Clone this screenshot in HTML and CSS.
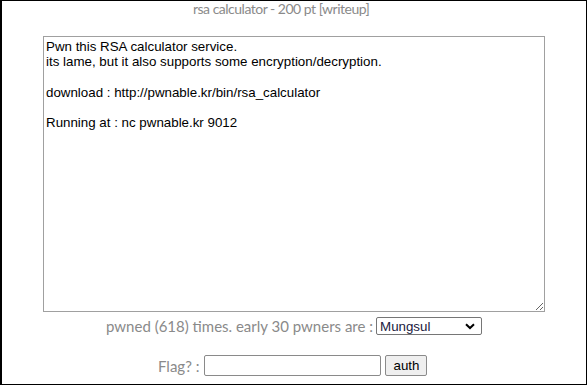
FILE: index.html
```html
<!DOCTYPE html>
<html>
<head>
<meta charset="utf-8">
<link rel="stylesheet" href="styles.css">
</head>
<body>
<div class="frame">
  <div class="title">rsa calculator - 200 pt [writeup]</div>
  <textarea class="desc" readonly>Pwn this RSA calculator service.
its lame, but it also supports some encryption/decryption.

download : http://pwnable.kr/bin/rsa_calculator

Running at : nc pwnable.kr 9012
</textarea>
  <div class="pwned">
    <span class="label">pwned (618) times. early 30 pwners are :</span>
    <span class="select"><span class="opt">Mungsul</span><svg class="chev" width="10" height="7" viewBox="0 0 10 7"><path d="M1 1.2 L5 5 L9 1.2" fill="none" stroke="#000" stroke-width="2"/></svg></span>
  </div>
  <div class="flag">
    <span class="label">Flag? :</span>
    <span class="input"></span>
    <span class="btn">auth</span>
  </div>
</div>
</body>
</html>
```
FILE: styles.css
```css
html, body {
  margin: 0;
  padding: 0;
  background: #fff;
}
.frame {
  box-sizing: border-box;
  width: 587px;
  height: 385px;
  border: 1px solid #000;
  border-left-width: 2px;
  position: relative;
}
.title {
  font-family: Lato, "Open Sans", sans-serif;
  font-size: 14px;
  letter-spacing: -0.5px;
  color: #8a8a8a;
  padding-left: 191px;
  height: 20px;
  line-height: 16px;
}
.desc {
  display: block;
  box-sizing: border-box;
  margin: 15px 0 0 41px;
  width: 502px;
  height: 276px;
  border: 1px solid #a0a0a0;
  padding: 2px 2px;
  font-family: "Liberation Sans", Arial, sans-serif;
  font-size: 13.33px;
  line-height: 15.3px;
  color: #000;
  resize: both;
  outline: none;
}
.pwned, .flag {
  display: flex;
  align-items: center;
  font-family: Lato, "Open Sans", sans-serif;
  font-size: 15px;
  color: #8a8a8a;
}
.pwned {
  margin-top: 5px;
  padding-left: 104px;
  height: 18px;
}
.select {
  box-sizing: border-box;
  margin-left: 3px;
  width: 106px;
  height: 18px;
  border: 1px solid #767676;
  border-radius: 2px;
  display: flex;
  align-items: center;
  justify-content: space-between;
  padding: 0 6px 0 3px;
  font-family: "Liberation Sans", Arial, sans-serif;
  font-size: 13.33px;
  color: #1a1a40;
}
.flag {
  margin-top: 20px;
  padding-left: 156px;
  height: 21px;
}
.input {
  box-sizing: border-box;
  margin-left: 5px;
  width: 177px;
  height: 21px;
  border: 1px solid #8a8a8a;
  border-radius: 2px;
}
.btn {
  box-sizing: border-box;
  margin-left: 4px;
  width: 42px;
  height: 21px;
  border: 1px solid #8a8a8a;
  border-radius: 2px;
  background: #efefef;
  font-family: "Liberation Sans", Arial, sans-serif;
  font-size: 13.33px;
  color: #000;
  display: flex;
  align-items: center;
  justify-content: center;
}
```
